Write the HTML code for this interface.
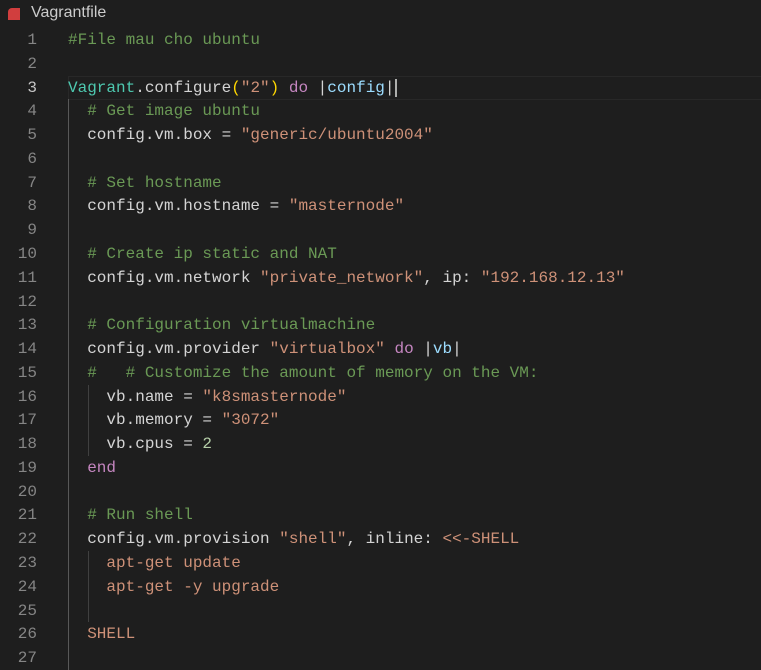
<!DOCTYPE html>
<html><head><meta charset="utf-8"><style>
html,body{margin:0;padding:0;background:#1e1e1e;width:761px;height:670px;overflow:hidden}
body{position:relative;font-family:"Liberation Mono",monospace;font-size:16px}
.hdr{position:absolute;left:31px;top:4px;font-family:"Liberation Sans",sans-serif;font-size:16px;color:#cccccc}
.l{position:absolute;left:0;height:24px;line-height:24px;white-space:pre;width:761px;margin-top:1px}
.n{position:absolute;right:724px;color:#858585;text-align:right}
.c{position:absolute;left:68px;color:#d4d4d4}
.cm{color:#6a9955}.s{color:#ce9178}.k{color:#c586c0}.v{color:#9cdcfe}.t{color:#4ec9b0}.y{color:#ffd700}.num{color:#b5cea8}
.g{position:absolute;width:1px;background:#404040}
</style></head><body>
<svg style="position:absolute;left:7px;top:7px" width="14" height="14"><path d="M5 1 H13 V13 H1 V5 A4 4 0 0 1 5 1Z" fill="#d13e3e"/></svg>
<div class="hdr">Vagrantfile</div>
<div style="position:absolute;left:68px;top:76px;width:693px;height:22px;border:1px solid #282828;border-right:none"></div>
<div class="g" style="left:68px;top:99px;height:571px;background:#585858"></div>
<div class="g" style="left:88px;top:385px;height:71px"></div>
<div class="g" style="left:88px;top:551px;height:71px"></div>
<div class="l" style="top:27px"><span class="n">1</span><span class="c"><span class="cm">#File mau cho ubuntu</span></span></div>
<div class="l" style="top:51px"><span class="n">2</span></div>
<div class="l" style="top:75px"><span class="n" style="color:#c6c6c6">3</span><span class="c"><span class="t">Vagrant</span>.configure<span class="y">(</span><span class="s">"2"</span><span class="y">)</span> <span class="k">do</span> |<span class="v">config</span>|<span style="border-left:2px solid #aeafad"></span></span></div>
<div class="l" style="top:98px"><span class="n">4</span><span class="c">  <span class="cm"># Get image ubuntu</span></span></div>
<div class="l" style="top:122px"><span class="n">5</span><span class="c">  config.vm.box = <span class="s">"generic/ubuntu2004"</span></span></div>
<div class="l" style="top:146px"><span class="n">6</span></div>
<div class="l" style="top:170px"><span class="n">7</span><span class="c">  <span class="cm"># Set hostname</span></span></div>
<div class="l" style="top:193px"><span class="n">8</span><span class="c">  config.vm.hostname = <span class="s">"masternode"</span></span></div>
<div class="l" style="top:217px"><span class="n">9</span></div>
<div class="l" style="top:241px"><span class="n">10</span><span class="c">  <span class="cm"># Create ip static and NAT</span></span></div>
<div class="l" style="top:265px"><span class="n">11</span><span class="c">  config.vm.network <span class="s">"private_network"</span>, ip: <span class="s">"192.168.12.13"</span></span></div>
<div class="l" style="top:289px"><span class="n">12</span></div>
<div class="l" style="top:312px"><span class="n">13</span><span class="c">  <span class="cm"># Configuration virtualmachine</span></span></div>
<div class="l" style="top:336px"><span class="n">14</span><span class="c">  config.vm.provider <span class="s">"virtualbox"</span> <span class="k">do</span> |<span class="v">vb</span>|</span></div>
<div class="l" style="top:360px"><span class="n">15</span><span class="c">  <span class="cm">#   # Customize the amount of memory on the VM:</span></span></div>
<div class="l" style="top:384px"><span class="n">16</span><span class="c">    vb.name = <span class="s">"k8smasternode"</span></span></div>
<div class="l" style="top:407px"><span class="n">17</span><span class="c">    vb.memory = <span class="s">"3072"</span></span></div>
<div class="l" style="top:431px"><span class="n">18</span><span class="c">    vb.cpus = <span class="num">2</span></span></div>
<div class="l" style="top:455px"><span class="n">19</span><span class="c">  <span class="k">end</span></span></div>
<div class="l" style="top:479px"><span class="n">20</span></div>
<div class="l" style="top:502px"><span class="n">21</span><span class="c">  <span class="cm"># Run shell</span></span></div>
<div class="l" style="top:526px"><span class="n">22</span><span class="c">  config.vm.provision <span class="s">"shell"</span>, inline: <span class="s">&lt;&lt;-SHELL</span></span></div>
<div class="l" style="top:550px"><span class="n">23</span><span class="c s">    apt-get update</span></div>
<div class="l" style="top:574px"><span class="n">24</span><span class="c s">    apt-get -y upgrade</span></div>
<div class="l" style="top:598px"><span class="n">25</span></div>
<div class="l" style="top:621px"><span class="n">26</span><span class="c s">  SHELL</span></div>
<div class="l" style="top:645px"><span class="n">27</span></div>
</body></html>
